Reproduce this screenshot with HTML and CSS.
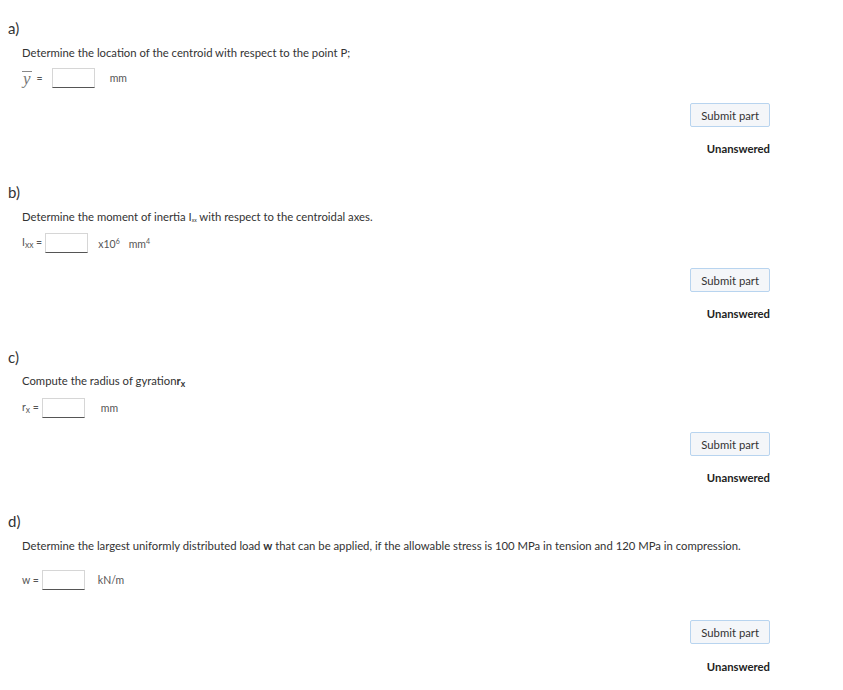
FILE: index.html
```html
<!DOCTYPE html>
<html>
<head>
<meta charset="utf-8">
<link rel="stylesheet" href="styles.css">
</head>
<body>
<div class="page">
  <section class="part part-a">
    <div class="part-label">a)</div>
    <p class="question">Determine the location of the centroid with respect to the point P;</p>
    <div class="answer-row">
      <span class="var var-y"><span class="ybar">y</span>=</span>
      <span class="input"></span>
      <span class="unit unit-a">mm</span>
    </div>
    <div class="actions">
      <button class="submit">Submit part</button>
      <div class="status">Unanswered</div>
    </div>
  </section>

  <section class="part part-b">
    <div class="part-label">b)</div>
    <p class="question">Determine the moment of inertia I<sub class="tiny">xx</sub> with respect to the centroidal axes.</p>
    <div class="answer-row">
      <span class="var">I<sub class="sub">xx</sub> =</span>
      <span class="input"></span>
      <span class="unit unit-b">x10<sup>6</sup></span>
      <span class="unit unit-b2">mm<sup>4</sup></span>
    </div>
    <div class="actions">
      <button class="submit">Submit part</button>
      <div class="status">Unanswered</div>
    </div>
  </section>

  <section class="part part-c">
    <div class="part-label">c)</div>
    <p class="question">Compute the radius of gyration<b>r<sub class="sub">x</sub></b></p>
    <div class="answer-row">
      <span class="var">r<sub class="sub">x</sub> =</span>
      <span class="input"></span>
      <span class="unit unit-c">mm</span>
    </div>
    <div class="actions">
      <button class="submit">Submit part</button>
      <div class="status">Unanswered</div>
    </div>
  </section>

  <section class="part part-d">
    <div class="part-label">d)</div>
    <p class="question">Determine the largest uniformly distributed load <b>w</b> that can be applied, if the allowable stress is 100 MPa in tension and 120 MPa in compression.</p>
    <div class="answer-row">
      <span class="var">w =</span>
      <span class="input"></span>
      <span class="unit unit-d">kN/m</span>
    </div>
    <div class="actions">
      <button class="submit">Submit part</button>
      <div class="status">Unanswered</div>
    </div>
  </section>
</div>
</body>
</html>
```
FILE: styles.css
```css
html, body {
  margin: 0;
  padding: 0;
  background: #fff;
}
body {
  font-family: "Lato", "Liberation Sans", sans-serif;
  color: #333;
  font-size: 11.3px;
}
.page {
  width: 770px;
  padding-top: 19px;
}
.part {
  display: flex;
  flex-direction: column;
  padding-left: 8px;
}
.part + .part {
  margin-top: 26px;
}
.part-label {
  font-size: 15px;
  line-height: 18px;
  height: 18px;
  color: #333;
}
.question {
  margin: 8px 0 0 14px;
  line-height: 16px;
  height: 16px;
  font-size: 11.3px;
  color: #333;
  white-space: nowrap;
}
.part-c .question { margin-top: 7px; }
.answer-row {
  margin: 7px 0 0 14px;
  height: 20px;
  display: flex;
  align-items: center;
}
.part-b .answer-row { margin-top: 8px; }
.part-c .answer-row { margin-top: 9px; }
.part-d .answer-row { margin-top: 16px; }
.var {
  color: #555;
  font-size: 10.5px;
  margin-right: 3px;
  white-space: nowrap;
}
.var-y {
  display: flex;
  align-items: center;
  margin-right: 9px;
}
.ybar {
  display: inline-block;
  font-family: "Liberation Serif", serif;
  font-style: italic;
  font-size: 17px;
  line-height: 13px;
  color: #777;
  border-top: 1px solid #888;
  padding: 0 1px;
  margin-right: 5px;
}
.sub {
  font-size: 8.5px;
  vertical-align: -2px;
}
.tiny {
  font-size: 5px;
  vertical-align: -1px;
}
.input {
  display: inline-block;
  width: 41px;
  height: 18px;
  border: 1px solid #d6d6d6;
  border-bottom: 1px solid #555;
  background: #fff;
}
.unit {
  color: #555;
  font-size: 10.5px;
}
.unit sup { font-size: 7px; vertical-align: 4px; }
.unit-a { margin-left: 15px; }
.unit-b { margin-left: 10px; }
.unit-b2 { margin-left: 9px; }
.unit-c { margin-left: 16px; }
.unit-d { margin-left: 13px; }
.actions {
  display: flex;
  flex-direction: column;
  align-items: flex-end;
  margin-top: 15px;
}
.part-c .actions { margin-top: 14px; }
.part-d .actions { margin-top: 30px; }
.submit {
  font-family: inherit;
  font-size: 11.3px;
  color: #333;
  background: #f4f6f9;
  border: 1px solid #b8d4ef;
  border-radius: 2px;
  height: 24px;
  padding: 0 10px;
  margin: 0;
}
.status {
  margin-top: 14px;
  line-height: 16px;
  height: 16px;
  font-weight: bold;
  font-size: 11.3px;
  color: #222;
}
.part-d .status { margin-top: 15px; }
```
